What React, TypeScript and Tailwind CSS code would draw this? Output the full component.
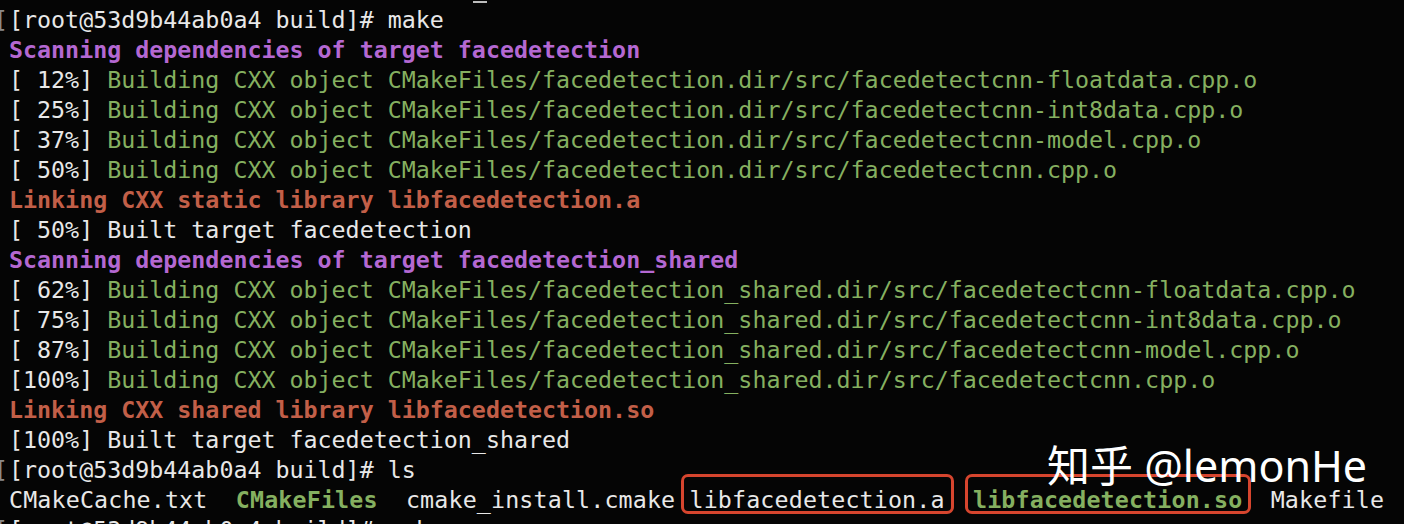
import type { ReactNode } from "react";

const WHITE = "text-[#e8e8e8]";
const GREEN = "text-[#85b060]";
const PURPLE = "text-[#b468d2] font-bold";
const RED = "text-[#c25f48] font-bold";

function Line({ children, mark = false, className }: { children: ReactNode; mark?: boolean; className?: string }) {
  return (
    <div className={`relative h-[30px] whitespace-pre pl-[9px] leading-[30px] ${className ?? ""}`}>
      {mark && <span className="absolute -left-[6px] top-0 text-[#8a8a8a]">[</span>}
      {children}
    </div>
  );
}

function Boxed({ children, className }: { children: ReactNode; className?: string }) {
  return (
    <span className={`relative ${className ?? ""}`}>
      {children}
      <span className="pointer-events-none absolute -left-[8px] -right-[9px] -top-[12px] -bottom-[1px] rounded-[7px] border-[3px] border-[#d6452e]" />
    </span>
  );
}

const building = [
  ["[ 12%]", "CMakeFiles/facedetection.dir/src/facedetectcnn-floatdata.cpp.o"],
  ["[ 25%]", "CMakeFiles/facedetection.dir/src/facedetectcnn-int8data.cpp.o"],
  ["[ 37%]", "CMakeFiles/facedetection.dir/src/facedetectcnn-model.cpp.o"],
  ["[ 50%]", "CMakeFiles/facedetection.dir/src/facedetectcnn.cpp.o"]
];

const buildingShared = [
  ["[ 62%]", "CMakeFiles/facedetection_shared.dir/src/facedetectcnn-floatdata.cpp.o"],
  ["[ 75%]", "CMakeFiles/facedetection_shared.dir/src/facedetectcnn-int8data.cpp.o"],
  ["[ 87%]", "CMakeFiles/facedetection_shared.dir/src/facedetectcnn-model.cpp.o"],
  ["[100%]", "CMakeFiles/facedetection_shared.dir/src/facedetectcnn.cpp.o"]
];

export default function App() {
  return (
    <div className="relative h-[524px] w-[1404px] overflow-hidden bg-[#050505] font-['DejaVu_Sans_Mono','Liberation_Mono',monospace] text-[23.3px] text-[#e8e8e8]">
      {/* cursor remnant from the previous line */}
      <div className="relative h-[5px]">
        <span className="absolute left-[473px] top-[1px] h-[2px] w-[14px] bg-[#bdbdbd]" />
      </div>

      <Line mark>
        <span className={WHITE}>[root@53d9b44ab0a4 build]# make</span>
      </Line>
      <Line>
        <span className={PURPLE}>Scanning dependencies of target facedetection</span>
      </Line>
      {building.map(([pct, file]) => (
        <Line key={file}>
          <span className={WHITE}>{pct} </span>
          <span className={GREEN}>Building CXX object {file}</span>
        </Line>
      ))}
      <Line>
        <span className={RED}>Linking CXX static library libfacedetection.a</span>
      </Line>
      <Line>
        <span className={WHITE}>[ 50%] Built target facedetection</span>
      </Line>
      <Line>
        <span className={PURPLE}>Scanning dependencies of target facedetection_shared</span>
      </Line>
      {buildingShared.map(([pct, file]) => (
        <Line key={file}>
          <span className={WHITE}>{pct} </span>
          <span className={GREEN}>Building CXX object {file}</span>
        </Line>
      ))}
      <Line>
        <span className={RED}>Linking CXX shared library libfacedetection.so</span>
      </Line>
      <Line>
        <span className={WHITE}>[100%] Built target facedetection_shared</span>
      </Line>
      <Line mark>
        <span className={WHITE}>[root@53d9b44ab0a4 build]# ls</span>
      </Line>
      <Line className="tracking-[0.15px]">
        <span className={WHITE}>CMakeCache.txt  </span>
        <span className={`${GREEN} font-bold`}>CMakeFiles</span>
        <span className={WHITE}>  cmake_install.cmake </span>
        <Boxed className={WHITE}>libfacedetection.a</Boxed>
        <span>  </span>
        <Boxed className={`${GREEN} font-bold`}>libfacedetection.so</Boxed>
        <span className={WHITE}>  Makefile</span>
      </Line>
      <Line mark>
        <span className={WHITE}>[root@53d9b44ab0a4 build]# make</span>
      </Line>

      {/* watermark */}
      <div className="absolute left-[1047px] top-[435px] whitespace-pre font-['Noto_Sans','Noto_Sans_CJK_SC',sans-serif] text-[43px] leading-[56px] text-white">
        <span className="font-['Noto_Sans_CJK_SC',sans-serif]">知乎</span> @lemonHe
      </div>
    </div>
  );
}
